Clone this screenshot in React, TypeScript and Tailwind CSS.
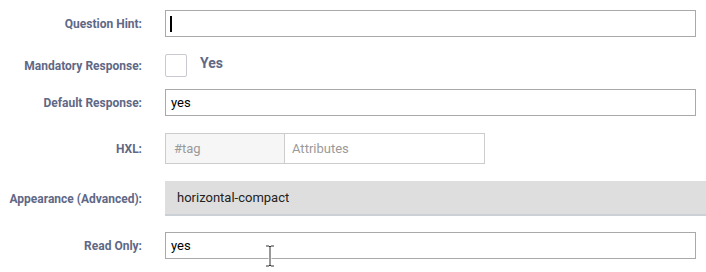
import React from "react";

const Label = ({children}: {children: React.ReactNode}) => (
 <div className="w-[142px] shrink-0 text-right text-[12px] font-bold text-[#5f6885]">
  {children}
 </div>
);

const App = () => {
 return (
  <div className="w-[706px] h-[272px] bg-white relative overflow-hidden font-['Roboto',sans-serif]">
   <div className="flex flex-col pt-[10px]">
    {/* Question Hint */}
    <div className="flex items-center h-[27px]">
     <Label>Question Hint:</Label>
     <div className="ml-[23px] w-[531px] h-[27px] border border-[#a9a9a9] flex items-center pl-[4px]">
      <span className="w-[1.5px] h-[16px] bg-black" />
     </div>
    </div>

    {/* Mandatory Response */}
    <div className="flex items-center h-[23px] mt-[17px]">
     <Label>Mandatory Response:</Label>
     <div className="ml-[23px] w-[22px] h-[23px] border border-[#c9c9d2] rounded-[2px] bg-white" />
     <span className="ml-[13px] text-[14px] font-bold text-[#5f6885] -mt-[4px]">Yes</span>
    </div>

    {/* Default Response */}
    <div className="flex items-center h-[27px] mt-[12px]">
     <Label>Default Response:</Label>
     <div className="ml-[23px] w-[531px] h-[27px] border border-[#a9a9a9] flex items-center pl-[5px] text-[13px] text-black">
      yes
     </div>
    </div>

    {/* HXL */}
    <div className="flex items-center h-[31px] mt-[17px]">
     <Label>HXL:</Label>
     <div className="ml-[23px] flex h-[31px]">
      <div className="w-[120px] h-full border border-[#cccccc] bg-[#f6f6f6] flex items-center pl-[8px] text-[13px] text-[#9a9a9a]">
       #tag
      </div>
      <div className="w-[200px] h-full border border-l-0 border-[#cccccc] bg-white flex items-center pl-[7px] text-[13px] text-[#9a9a9a]">
       Attributes
      </div>
     </div>
    </div>

    {/* Appearance */}
    <div className="flex items-center h-[35px] mt-[17px]">
     <Label>Appearance (Advanced):</Label>
     <div className="ml-[23px] flex-1 h-[35px] bg-[#dedede] border-b-2 border-[#cbd0d6] flex items-center pl-[12px] text-[13px] text-[#222]">
      horizontal-compact
     </div>
    </div>

    {/* Read Only */}
    <div className="flex items-center h-[27px] mt-[16px]">
     <Label>Read Only:</Label>
     <div className="ml-[23px] w-[531px] h-[27px] border border-[#a9a9a9] flex items-center pl-[5px] text-[13px] text-black">
      yes
     </div>
    </div>
   </div>

   {/* mouse I-beam cursor */}
   <svg className="absolute left-[265px] top-[245px]" width="10" height="22" viewBox="0 0 10 22">
    <path d="M1 1h3l1 1 1-1h3M5 2v18M1 21h3l1-1 1 1h3" stroke="#fff" strokeWidth="3" fill="none" />
    <path d="M1 1h3l1 1 1-1h3M5 2v18M1 21h3l1-1 1 1h3" stroke="#333" strokeWidth="1" fill="none" />
   </svg>
  </div>
 );
};

export default App;
